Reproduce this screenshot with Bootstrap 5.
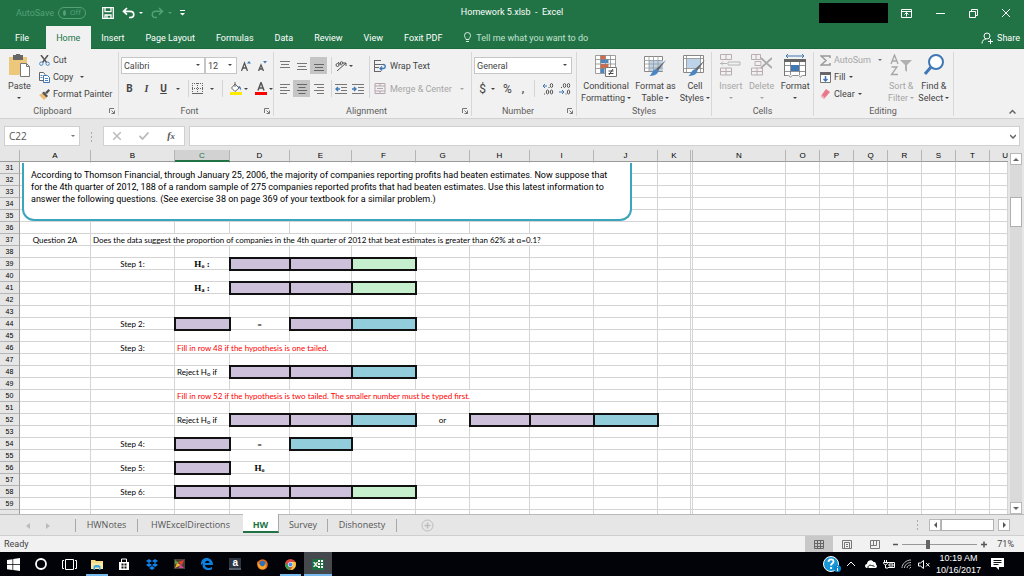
<!DOCTYPE html>
<html lang="en">
<head>
<meta charset="utf-8">
<meta name="viewport" content="width=device-width, initial-scale=1">
<title>Homework 5.xlsb - Excel</title>
<link href="https://cdn.jsdelivr.net/npm/bootstrap@5.3.0/dist/css/bootstrap.min.css" rel="stylesheet">
<style>
:root{--xl:#217346;--bar:#e6e6e6;--ribbon:#f1f1f1;--ui:Roboto,"Liberation Sans",sans-serif}
body{font:9px/12px var(--ui);color:#444;background:#fff;overflow:hidden}
button{border:0;background:none;padding:0;color:inherit;font:inherit;line-height:12px;white-space:nowrap}
svg{display:block;flex:none}
.caret{display:inline-block;border:2px solid transparent;border-top-color:currentColor;border-bottom:0;flex:none}
/* title bar and ribbon tabs */
.titlebar{background:var(--xl);color:#fff;height:26px}
.faded{color:#54a077}
.toggle{border:1px solid;border-radius:8px;height:12px;width:28px;font-size:8px;line-height:10px}
.dot{width:6px;height:6px;border-radius:50%;background:currentColor}
.doc-title{left:0;right:0;top:6px;text-align:center;pointer-events:none}
.window-tools{gap:24px;padding-right:14px}
.account{background:#000;width:69px;height:20px;margin-right:-11px}
.menubar{background:var(--xl);height:23px;border-bottom:1px solid #1b6a3d}
.menubar button{padding:0 10px 0 11px;height:23px;color:#fff}
.menubar .file{margin-right:7px}
.menubar .current{background:var(--ribbon);color:var(--xl);padding:0 11px 0 10px}
.menubar .current+button{padding-left:10px}
.menubar .hint{color:#c3e2d0}
/* ribbon */
.ribbon{background:var(--ribbon);height:70px;border-bottom:1px solid #d2d2d2}
.group{border-right:1px solid #d8d8d8;margin:3px 0 2px;height:64px}
.group-body{height:54px}
.group-name{height:10px;line-height:10px;color:#5c5c5c;position:relative;text-align:center}
.launch{position:absolute;right:3px;top:2px}
.off{color:#a6a6a6}
.big{display:flex;flex-direction:column;align-items:center;gap:2px;color:#444;padding-top:2px}
.big.off{color:#a6a6a6}
.big .label{line-height:12px;text-align:center}
.big svg{height:24px}
.big .caret{vertical-align:2px}
.stack{display:flex;flex-direction:column;gap:5px;padding-top:2px}
.stack button{display:flex;align-items:center;gap:3px}
.row-top{padding-top:5px}
.row-low{margin-top:6px}
.ribbon select{border:1px solid #c6c6c6;background:#fff;color:#444;font:9px/12px var(--ui);border-radius:0;appearance:none;height:17px;padding:0 2px}
.pick{position:relative}
.pick .caret{position:absolute;right:5px;top:7px}
.ico{width:17px;height:17px;display:flex;align-items:center;justify-content:center}
.ico.on{background:#c5c5c5}
.vr-line{width:1px;height:17px;background:#d4d4d4}
.vr-tall{height:42px;margin-top:4px}
.glyph{font-weight:700;font-size:10px}
/* formula bar */
.formula{background:var(--bar);height:32px;padding:7px 4px 0}
.formula>*{height:20px}
.box{background:#fff;border:1px solid #d0d0d0}
.formula input{font:10px/12px "Open Sans",sans-serif;color:#555;min-width:0;height:20px;border-radius:0}
.formula .pick .caret{top:9px}
.namebox{width:76px}
.grip{margin:0 8px}
.fxbox{width:82px}
.fx{font:italic 700 10px/12px "Liberation Serif",serif;color:#555}
.entry{background:#fff;border:1px solid #d0d0d0;width:100%;padding:0 16px 0 4px}
/* grid */
.sheet{background:var(--bar);min-height:0}
.grid-wrap{overflow:hidden;min-height:0}
.cells{table-layout:fixed;width:100%;border-collapse:separate;border-spacing:0;background:#fff;color:#000;font:8px/10px Lato,Roboto,sans-serif}
.cells th,.cells td{padding:0;height:12px;border:0 solid #d4d4d4;border-width:0 1px 1px 0;white-space:nowrap}
.cells thead th{background:var(--bar);height:12px;border-bottom:1px solid #9b9b9b;border-right-color:#b5b5b5;font:8px/9px "Liberation Sans",sans-serif;color:#000;text-align:center}
.cells thead th:last-child{text-align:right;border-right:0}
.cells thead th.sel{background:#d2d2d2;color:var(--xl);border-bottom:2px solid var(--xl)}
.cells tbody th{background:var(--bar);border-right-color:#9b9b9b;border-bottom-color:#b5b5b5;font:7px/10px "Liberation Sans",sans-serif;color:#000;text-align:center}
.cells td{text-align:center}
.cells td.left{text-align:left;padding-left:2px}
.cells .red{color:#f00}
.cells sub{font-size:6px;line-height:1;bottom:-1px}
.hyp{font:700 9px/10px "Liberation Serif",serif}
.lilac,.green,.blue{outline:2px solid #111;outline-offset:-1px;position:relative}
.lilac{background:#ccc0da}.green{background:#c6efce}.blue{background:#92cddc}
.note{left:22px;top:13px;width:610px;height:58px;border:2px solid #3aa5bd;border-top:0;border-radius:0 0 12px 12px;background:#fff;color:#000;padding:6px 0 0 7px;line-height:12px;z-index:2}
.vscroll{width:16px;padding:3px 2px 0}
.vscroll .track{background:#dadada}
.sbtn{border:1px solid #b8b8b8;background:#fff;width:12px;height:12px;display:flex;align-items:center;justify-content:center;flex:none}
.thumb{height:30px;border:1px solid #b0b0b0;background:#fff;margin-top:32px}
/* sheet tabs, status and task bars */
.tabs{background:var(--bar);height:22px;border-top:1px solid #b9b9b9;border-bottom:1px solid #cfcfcf;font:9px/12px "Open Sans",sans-serif}
.tabs .tab{color:#555;position:relative;height:13px;margin-top:4px;border-right:1px solid #a8a8a8;text-decoration:none;text-align:center}
.tabs .tab.active{color:var(--xl);font-weight:700;background:#fff;height:19px;margin-top:-1px;padding-top:5px;border-bottom:2px solid var(--xl)}
.tab-scroll{margin-right:14px}
.hbar{width:53px;height:12px;border:1px solid #b0b0b0;background:#fff}
.status{background:#f1f1f1;height:16px}
.status .view{width:28px;height:16px;display:flex;align-items:center;justify-content:center}
.status .view.on{background:#c8c8c8}
.percent{margin-left:10px;padding-right:10px}
.zoom{appearance:none;width:75px;height:10px;background:linear-gradient(#999,#999) center/100% 1px no-repeat}
.zoom::-webkit-slider-thumb{appearance:none;width:4px;height:9px;background:#666}
.taskbar{background:#020308;height:24px;color:#fff}
.apps{display:grid;grid-template-columns:repeat(12,1fr);width:332px}
.apps button{height:24px;display:flex;align-items:center;justify-content:center}
.apps .open{border-bottom:2px solid #76b9ed;padding-top:2px;margin:0 3px}
.apps .front{background:#45484c;margin:0}
.amazon{background:#2b3440;width:12px;height:12px;font:700 10px/9px "Liberation Sans",sans-serif;border-bottom:2px solid #55606c}
.excel{background:#1d6f42;height:11px;padding:0 1px;font:700 8px/11px var(--ui)}
.tray{gap:6px}
.clock{font:9px/12px "Liberation Sans",sans-serif;text-align:center}
</style>
</head>
<body class="d-flex flex-column vh-100">

<header>
<div class="titlebar d-flex align-items-center position-relative">
  <span class="faded ms-3">AutoSave</span>
  <button class="toggle faded d-flex align-items-center gap-1 ms-1 px-1" aria-label="AutoSave off"><span class="dot"></span>Off</button>
  <button class="ms-3" aria-label="Save"><svg width="12" height="12" viewBox="0 0 12 12" fill="none" stroke="#fff" stroke-width="1.3"><path d="M.7.7h10.600v10.600H.7zM3 .7v4h6v-4M3 11.300V8h6v3.300M5 8v3"/></svg></button>
  <button class="ms-2 d-flex align-items-center gap-1" aria-label="Undo"><svg width="13" height="12" viewBox="0 0 13 12" fill="none" stroke="#fff" stroke-width="1.700"><path d="M5 1 1.500 4.300 5 7.600M1.500 4.300H8c5 0 5 6.200 0 6.200H7"/></svg><span class="caret"></span></button>
  <button class="ms-2 d-flex align-items-center gap-1 faded" aria-label="Redo"><svg width="13" height="12" viewBox="0 0 13 12" fill="none" stroke="currentColor" stroke-width="1.500"><path d="m8 1 3.500 3.300L8 7.600M11.500 4.300H5c-5 0-5 6.200 0 6.200h1"/></svg><span class="caret"></span></button>
  <button class="ms-2" aria-label="Customize toolbar"><svg width="5" height="6" viewBox="0 0 5 6" fill="#fff"><path d="M0 0h5v1H0zM0 3h5L2.500 5.500z"/></svg></button>
  <div class="doc-title position-absolute">Homework 5.xlsb&nbsp; -&nbsp; Excel</div>
  <div class="window-tools d-flex align-items-center ms-auto">
    <div class="account"></div>
    <button aria-label="Ribbon display options"><svg width="11" height="9" viewBox="0 0 11 9" fill="none" stroke="#fff"><path d="M.5.5h10v8H.5zM.5 2.500h10M5.500 7.500v-4M3.500 5.500l2-2 2 2"/></svg></button>
    <button aria-label="Minimize"><svg width="9" height="9" stroke="#fff"><path d="M0 4.500h9"/></svg></button>
    <button aria-label="Restore"><svg width="9" height="9" viewBox="0 0 9 9" fill="none" stroke="#fff"><path d="M.5 2.500h6v6h-6zM2.500 2.500v-2h6v6h-2"/></svg></button>
    <button aria-label="Close"><svg width="8" height="8" stroke="#fff"><path d="m0 0 8 8M8 0 0 8"/></svg></button>
  </div>
</div>
<nav class="menubar d-flex ps-1">
  <button class="file">File</button><button class="current">Home</button><button>Insert</button><button>Page Layout</button><button>Formulas</button><button>Data</button><button>Review</button><button>View</button><button>Foxit PDF</button>
  <button class="hint d-flex align-items-center gap-1"><svg width="9" height="11" viewBox="0 0 9 11" fill="none" stroke="#d8eee1"><path d="M3 7.500C3 6 1.500 5.500 1.500 3.500a3 3 0 0 1 6 0c0 2-1.500 2.500-1.500 4zM3 9.500h3"/></svg>Tell me what you want to do</button>
  <button class="ms-auto d-flex align-items-center gap-1 pe-1"><svg width="12" height="12" viewBox="0 0 12 12" fill="none" stroke="#fff"><circle cx="6" cy="4" r="3"/><path d="M1 11.500c0-3 2-4.500 4-4.500M9.500 7v5M7 9.500h5"/></svg>Share</button>
</nav>

<div class="ribbon d-flex">
  <section class="group" style="width:119px">
    <div class="group-body d-flex ps-2 gap-2">
      <button class="big"><svg width="22" height="24" viewBox="0 0 22 24"><path d="M1 3h18v18H1z" fill="#edc77c"/><path d="M5 1h10v5H5z" fill="#666"/><path d="M8 0h4v3H8z" fill="#666"/><path d="M12.500 9.500h6l3 3v10h-9z" fill="#fff" stroke="#777"/><path d="M18.500 9.500v3h3" fill="none" stroke="#777"/></svg><span class="label">Paste<br><span class="caret"></span></span></button>
      <div class="stack">
        <button><svg width="11" height="11" viewBox="0 0 11 11" fill="none"><path d="m2 0 5.500 7.500M9 0 3.500 7.500" stroke="#555" stroke-width="1.500"/><circle cx="2.300" cy="8.700" r="1.700" stroke="#4a86c5"/><circle cx="8.700" cy="8.700" r="1.700" stroke="#4a86c5"/></svg>Cut</button>
        <button><svg width="11" height="11" viewBox="0 0 11 11"><path d="M.5.5h4l1.500 2v6H.5z" fill="#fff" stroke="#666"/><path d="M4.500 3.500h4l2 2v5h-6z" fill="#fff" stroke="#3f78b5"/><path d="M6 6.500h3M6 8.500h3M1.500 3.500h2M1.500 5.500h2" stroke="#4a86c5"/></svg>Copy<span class="caret ms-1"></span></button>
        <button><svg width="11" height="11" viewBox="0 0 11 11"><path d="m0 6 4-2 4 4-3 3z" fill="#edbd76"/><path d="m3 4 2-1.500L9 7 7.500 8.500zM6 3.500 9.500 0 11 1.500 8 5z" fill="#555"/></svg>Format Painter</button>
      </div>
    </div>
    <div class="group-name" style="padding-right:13px">Clipboard<svg class="launch" width="6" height="6" fill="none" stroke="#777"><path d="M.5 5V.5H5M2.500 2.500l3 3M5.500 2.500v3h-3"/></svg></div>
  </section>

  <section class="group" style="width:155px">
    <div class="group-body" style="padding-left:2px">
      <div class="d-flex row-top align-items-center">
        <label class="pick"><select aria-label="Font" style="width:84px"><option>Calibri</option></select><span class="caret"></span></label>
        <label class="pick"><select aria-label="Font size" style="width:32px"><option>12</option></select><span class="caret"></span></label>
        <button class="ico" aria-label="Grow font"><svg width="10" height="10" viewBox="0 0 10 10" fill="none"><path d="m.5 10 3-8 3 8M1.500 7h4" stroke="#555" stroke-width="1.300"/><path d="m6 2.500 2-2.500 2 2.500z" fill="#3f78b5"/></svg></button>
        <button class="ico" aria-label="Shrink font"><svg width="9" height="10" viewBox="0 0 9 10" fill="none"><path d="M.5 10 3 4l2.500 6M1.300 8h3.400" stroke="#555" stroke-width="1.300"/><path d="m5 0 2 2.500L9 0z" fill="#3f78b5"/></svg></button>
      </div>
      <div class="d-flex align-items-center row-low">
        <button class="ico glyph">B</button><button class="ico fst-italic glyph" style="font-family:Liberation Serif,serif">I</button><button class="ico text-decoration-underline glyph">U</button><span class="caret ms-1 me-2"></span>
        <span class="vr-line"></span>
        <button class="ico" aria-label="Borders"><svg width="11" height="11" viewBox="0 0 11 11" fill="none" stroke="#666"><path d="M0 .5h11M.5 0v11M10.500 0v11M5.500 0v11M0 5.500h11" stroke-dasharray="1 1"/><path d="M0 10.500h11"/></svg></button><span class="caret ms-1 me-2"></span>
        <span class="vr-line"></span>
        <button class="ico ms-1" aria-label="Fill color"><svg width="12" height="13" viewBox="0 0 12 13"><path d="M0 10h12v3H0z" fill="#ffeb00"/><path d="m5 2 4 4-4 3.500L1.500 6z" fill="#fff" stroke="#666"/><path d="M5 5V0" stroke="#666"/><path d="M8.500 4c2 0 3 2 2.500 5-.5-2-1-2.500-2-3z" fill="#3f78b5"/></svg></button><span class="caret me-1"></span>
        <button class="ico" aria-label="Font color"><svg width="12" height="13" viewBox="0 0 12 13"><path d="M0 10h12v3H0z" fill="#f00"/><path d="m3 8.500 3-8 3 8M4 6h4" fill="none" stroke="#555" stroke-width="1.500"/></svg></button><span class="caret"></span>
      </div>
    </div>
    <div class="group-name" style="padding-right:13px">Font<svg class="launch" width="6" height="6" fill="none" stroke="#777"><path d="M.5 5V.5H5M2.500 2.500l3 3M5.500 2.500v3h-3"/></svg></div>
  </section>

  <section class="group" style="width:198px">
    <div class="group-body d-flex">
      <div style="width:95px;padding-left:2px">
        <div class="d-flex row-top align-items-center">
          <button class="ico" aria-label="Top align"><svg width="10" height="10" stroke="#777"><path d="M0 .5h10M1 3.500h8M0 6.500h10"/></svg></button>
          <button class="ico" aria-label="Middle align"><svg width="10" height="8" stroke="#777"><path d="M0 1.500h10M1 4.500h8M0 7.500h10"/></svg></button>
          <button class="ico on" aria-label="Bottom align"><svg width="10" height="10" stroke="#666"><path d="M0 3.500h10M1 6.500h8M0 9.500h10"/></svg></button>
          <span class="vr-line ms-1"></span>
          <button class="ico" aria-label="Orientation"><svg width="12" height="11" viewBox="0 0 12 11" fill="none" stroke="#555"><path d="m2 11 9-8M8 3h3v3"/><circle cx="2.500" cy="5" r="1.500"/><path d="m3 2 3 3.500"/><circle cx="6.500" cy="3" r="1.300"/></svg></button><span class="caret"></span>
        </div>
        <div class="d-flex align-items-center row-low">
          <button class="ico" aria-label="Align left"><svg width="10" height="10" stroke="#777"><path d="M0 .5h10M0 3.500h7M0 6.500h10M0 9.500h7"/></svg></button>
          <button class="ico on" aria-label="Center"><svg width="10" height="10" stroke="#666"><path d="M0 .5h10M1.500 3.500h7M0 6.500h10M1.500 9.500h7"/></svg></button>
          <button class="ico" aria-label="Align right"><svg width="10" height="10" stroke="#777"><path d="M0 .5h10M3 3.500h7M0 6.500h10M3 9.500h7"/></svg></button>
          <span class="vr-line ms-1"></span>
          <button class="ico" aria-label="Decrease indent"><svg width="12" height="10" viewBox="0 0 12 10" fill="none"><path d="M0 .5h12M6 3.500h6M6 6.500h6M0 9.500h12" stroke="#777"/><path d="M5 5H1m2-2L1 5l2 2" stroke="#3f78b5" stroke-width="1.300"/></svg></button>
          <button class="ico" aria-label="Increase indent"><svg width="12" height="10" viewBox="0 0 12 10" fill="none"><path d="M0 .5h12M6 3.500h6M6 6.500h6M0 9.500h12" stroke="#777"/><path d="M0 5h4M2 3l2 2-2 2" stroke="#3f78b5" stroke-width="1.300"/></svg></button>
        </div>
      </div>
      <span class="vr-line vr-tall"></span>
      <div class="row-top ps-1">
        <button class="d-flex align-items-center gap-1" style="height:17px"><svg width="12" height="12" viewBox="0 0 12 12" fill="none"><path d="M0 .5h7M0 4.500h10M0 7.500h5M0 11.500h7M.5 0v12" stroke="#666"/><path d="M9 4.500c3 0 3 4 0 4H6.500M8 6.500l-2 2 2 2" stroke="#3f78b5" stroke-width="1.300"/></svg>Wrap Text</button>
        <button class="d-flex align-items-center gap-1 off row-low" style="height:17px"><svg width="12" height="11" viewBox="0 0 11 11" fill="none" stroke="#b5a5ad"><path d="M.5.5h10v10H.5zM.5 3h10M.5 8h10M5.500 0v3M5.500 8v3M2.500 5.500h6"/></svg>Merge &amp; Center<span class="caret ms-1"></span></button>
      </div>
    </div>
    <div class="group-name" style="padding-right:12px">Alignment<svg class="launch" width="6" height="6" fill="none" stroke="#777"><path d="M.5 5V.5H5M2.500 2.500l3 3M5.500 2.500v3h-3"/></svg></div>
  </section>

  <section class="group" style="width:105px">
    <div class="group-body" style="padding-left:2px">
      <div class="row-top d-flex"><label class="pick"><select aria-label="Number format" style="width:98px"><option>General</option></select><span class="caret"></span></label></div>
      <div class="d-flex align-items-center row-low">
        <button class="ico" style="font-size:12px">$</button><span class="caret"></span>
        <button class="ico ms-1" style="font-size:12px">%</button><button class="ico glyph" style="width:14px">,</button>
        <span class="vr-line mx-1"></span>
        <button class="ico" aria-label="Increase decimal"><svg width="12" height="12" viewBox="0 0 12 12" fill="none"><path d="M5 3H1m2-2L1 3l2 2" stroke="#3f78b5"/><g stroke="#555"><ellipse cx="9.500" cy="2.500" rx="1.200" ry="2"/><ellipse cx="5.500" cy="9" rx="1.200" ry="2"/><ellipse cx="9.500" cy="9" rx="1.200" ry="2"/><path d="M6.500 4.500h1M2 11h1"/></g></svg></button>
        <button class="ico" aria-label="Decrease decimal"><svg width="12" height="12" viewBox="0 0 12 12" fill="none"><path d="M0 9h5M3 7l2 2-2 2" stroke="#3f78b5"/><g stroke="#555"><ellipse cx="5.500" cy="2.500" rx="1.200" ry="2"/><ellipse cx="9.500" cy="2.500" rx="1.200" ry="2"/><ellipse cx="9.500" cy="9" rx="1.200" ry="2"/><path d="M2 4.500h1M6.500 11h1"/></g></svg></button>
      </div>
    </div>
    <div class="group-name" style="padding-right:12px">Number<svg class="launch" width="6" height="6" fill="none" stroke="#777"><path d="M.5 5V.5H5M2.500 2.500l3 3M5.500 2.500v3h-3"/></svg></div>
  </section>

  <section class="group" style="width:135px">
    <div class="group-body d-flex ps-1 gap-1">
      <button class="big"><svg width="23" height="24" viewBox="0 0 23 24"><path d="M.5 1.500h20v18H.5z" fill="#fff"/><path d="M5.500 1h5v4h-5zM5.500 10h8v4h-8z" fill="#dd6540"/><path d="M5.500 5h8v4h-8zM5.500 14h4v5h-4z" fill="#4a86c5"/><path d="M.5 1.500h20v18H.5zM.5 5.500h20M.5 10h20M.5 14.500h20M5.500 1v18M10.500 1v18M15.500 1v18" fill="none" stroke="#888" stroke-width=".8"/><path d="M10.500 13.500h11v9h-11z" fill="#fff" stroke="#777"/><path d="M13.500 17h5M13.500 19.500h5M18 15l-4 6" stroke="#444"/></svg><span class="label">Conditional<br>Formatting <span class="caret"></span></span></button>
      <button class="big"><svg width="23" height="24" viewBox="0 0 23 24"><path d="M.5 2.500h18v15H.5z" fill="#fff" stroke="#888"/><path d="M5 6h14v11H5z" fill="#bcd3ea"/><path d="M0 6.500h19M0 10h19M0 14h19M5 2v15M9.500 2v15M14 2v15" stroke="#999" stroke-width=".8"/><path d="m22 6-8 11-2-2z" fill="#666"/><path d="M13 15c3 2 1 7-8 7 3-1 3-7 8-7z" fill="#4a86c5"/></svg><span class="label">Format as<br>Table <span class="caret"></span></span></button>
      <button class="big"><svg width="23" height="24" viewBox="0 0 23 24"><path d="M.5 1.500h20v17H.5z" fill="#fff" stroke="#888"/><path d="M4 5h13v9H4z" fill="#bcd3ea"/><path d="M0 4.500h20M0 14.500h20M3.500 1v17M17.500 1v17" stroke="#888" stroke-width=".8"/><path d="m22 6-8 11-2-2z" fill="#666"/><path d="M13 15c3 2 1 7-8 7 3-1 3-7 8-7z" fill="#4a86c5"/></svg><span class="label">Cell<br>Styles <span class="caret"></span></span></button>
    </div>
    <div class="group-name">Styles</div>
  </section>

  <section class="group" style="width:102px">
    <div class="group-body d-flex justify-content-around ps-1">
      <button class="big off"><svg width="21" height="24" viewBox="0 0 21 24" fill="none" stroke="#b9adb3"><path d="M.5.500h11v5H.5zM.5 14h11v7H.5zM6 .5v5M6 14v7M.5 17.500h11"/><path d="M8 8h12v3H8zM0 9.500h7M3 7.500l-2 2 2 2" stroke="#b5b5b5"/></svg><span class="label">Insert<br><span class="caret"></span></span></button>
      <button class="big off"><svg width="21" height="24" viewBox="0 0 21 24" fill="none" stroke="#b9adb3"><path d="M.5.500h9v5h-9zM.5 14h11v7H.5zM5 .5v5M6 14v7M.5 17.500h11M4 7.500h6v4H4z"/><path d="m10 4 11 10M21 4 10 14" stroke="#aaa" stroke-width="1.800"/></svg><span class="label">Delete<br><span class="caret"></span></span></button>
      <button class="big"><svg width="22" height="24" viewBox="0 0 22 24" fill="none" stroke="#777"><path d="M2 2h18M4 0 2 2l2 2M18 0l2 2-2 2" stroke="#3f78b5"/><path d="M.5 5v17M21.500 5v17" stroke="#777"/><path d="M0 5h22v3H0z" fill="#666" stroke="none"/><path d="M1 8h20v13H1z" fill="#fff" stroke="none"/><path d="M.5 11.500h21M.5 17.500h21M6.500 8v13M15.500 8v13M.5 21.500h4l2 1.500 2-1.500h6l2 1.500 2-1.500h3" stroke-width=".8"/><path d="M7 11h8v6H7z" fill="#3f78b5" stroke="none"/></svg><span class="label">Format<br><span class="caret"></span></span></button>
    </div>
    <div class="group-name">Cells</div>
  </section>

  <section class="group" style="width:140px">
    <div class="group-body d-flex ps-1">
      <div class="stack" style="width:70px;padding-left:2px">
        <button class="off"><svg width="11" height="11" viewBox="0 0 11 11" fill="none" stroke="#999" stroke-width="1.500"><path d="M10 3V1H1l5 4.500L1 10h9V8"/></svg>AutoSum<span class="caret ms-1 text-secondary"></span></button>
        <button><svg width="11" height="11" viewBox="0 0 11 11" fill="none"><path d="M.5.5h10v10H.5z" fill="#fff" stroke="#777"/><path d="M0 0h11v3H0z" fill="#666"/><path d="M5.500 4v5M3.500 7l2 2 2-2" stroke="#3f78b5" stroke-width="1.500"/></svg>Fill<span class="caret"></span></button>
        <button><svg width="11" height="11" viewBox="0 0 11 11"><path d="m6 0 4 3-6 7-3-3z" fill="#e8788a"/><path d="m2 6 3 3-1 1-3-2z" fill="#f3b6c0"/></svg>Clear<span class="caret"></span></button>
      </div>
      <button class="big off"><svg width="22" height="24" viewBox="0 0 22 24" fill="none" stroke="#a6a6a6" stroke-width="1.300"><path d="m1 10 3.500-9L8 10M2 7h5M1.500 13H7L1.500 20.500H8"/><path d="M10 6h12l-5 5v7l-2-2v-5z" fill="#b0b0b0" stroke="none"/></svg><span class="label">Sort &amp;<br>Filter <span class="caret"></span></span></button>
      <button class="big ms-1"><svg width="22" height="24" viewBox="0 0 22 24" fill="none" stroke="#3f78b5"><circle cx="13" cy="8" r="7" stroke-width="2" fill="#fff"/><path d="m8 13-6 7" stroke-width="3"/></svg><span class="label">Find &amp;<br>Select <span class="caret"></span></span></button>
    </div>
    <div class="group-name" style="padding-right:1px">Editing</div>
  </section>
  <button class="ms-auto align-self-end me-2 mb-1" aria-label="Collapse the ribbon"><svg width="7" height="5" fill="none" stroke="#666" stroke-width="1.500"><path d="M.5 4.500l3-3 3 3"/></svg></button>
</div>
</header>

<div class="formula d-flex">
  <label class="pick namebox"><input class="box w-100 px-1" aria-label="Name box" value="C22"><span class="caret" style="color:#777"></span></label>
  <svg class="grip" width="7" height="20" fill="#aaa"><path d="M3 6h1v2H3zM3 10h1v2H3zM3 14h1v2H3z"/></svg>
  <div class="box fxbox d-flex align-items-center justify-content-around me-1">
    <button aria-label="Cancel"><svg width="8" height="8" stroke="#bbb" stroke-width="1.500"><path d="m0 0 8 8M8 0 0 8"/></svg></button>
    <button aria-label="Enter"><svg width="10" height="8" fill="none" stroke="#bbb" stroke-width="1.800"><path d="m.5 4 3 3 6-6.500"/></svg></button>
    <button aria-label="Insert function" class="fx">f<small>x</small></button>
  </div>
  <label class="pick flex-fill"><input class="entry" aria-label="Formula"><svg class="position-absolute end-0 top-0 mt-2 me-1" width="6" height="5" fill="none" stroke="#666" stroke-width="1.500"><path d="m0 1 3 3 3-3"/></svg></label>
</div>

<main class="sheet flex-fill d-flex">
  <div class="grid-wrap flex-fill position-relative">
    <table class="cells">
      <colgroup id="cols"></colgroup>
      <thead><tr id="letters"></tr></thead>
      <tbody id="rows"></tbody>
    </table>
    <div class="note position-absolute">According to Thomson Financial, through January 25, 2006, the majority of companies reporting profits had beaten estimates. Now suppose that<br>for the 4th quarter of 2012, 188 of a random sample of 275 companies reported profits that had beaten estimates. Use this latest information to<br>answer the following questions. (See exercise 38 on page 369 of your textbook for a similar problem.)</div>
  </div>
  <div class="vscroll d-flex flex-column">
    <div class="track d-flex flex-column flex-fill">
      <button class="sbtn" aria-label="Scroll up"><svg width="6" height="3" fill="#666"><path d="m0 3 3-3 3 3z"/></svg></button>
      <div class="thumb"></div>
      <button class="sbtn mt-auto" aria-label="Scroll down"><svg width="6" height="3" fill="#666"><path d="m0 0 3 3 3-3z"/></svg></button>
    </div>
  </div>
</main>

<footer>
<div class="tabs d-flex">
  <div class="tab d-flex align-items-center justify-content-center gap-3" style="width:76px;color:#bbb"><svg width="4" height="6" fill="currentColor"><path d="M4 0v6L0 3z"/></svg><svg width="4" height="6" fill="currentColor"><path d="M0 0v6l4-3z"/></svg></div>
  <a href="#" class="tab" style="width:62px">HWNotes</a><a href="#" class="tab border-0" style="width:105px">HWExcelDirections</a><a href="#" class="tab active" style="width:36px">HW</a><a href="#" class="tab" style="width:49px">Survey</a><a href="#" class="tab" style="width:69px">Dishonesty</a>
  <button class="ms-4" aria-label="New sheet"><svg width="13" height="13" fill="none" stroke="#bdbdbd"><circle cx="6.500" cy="6.500" r="5.500"/><path d="M6.500 3.500v6M3.500 6.500h6" stroke-width="1.500"/></svg></button>
  <div class="tab-scroll d-flex align-items-center ms-auto">
    <svg class="me-2" width="5" height="10" fill="#aaa"><path d="M1 0h1v2H1zM1 4h1v2H1zM1 8h1v2H1z"/></svg>
    <button class="sbtn" aria-label="Scroll left"><svg width="3" height="6" fill="#555"><path d="M3 0v6L0 3z"/></svg></button><div class="hbar me-1"></div><button class="sbtn" aria-label="Scroll right"><svg width="3" height="6" fill="#555"><path d="M0 0v6l3-3z"/></svg></button>
  </div>
</div>
<div class="status d-flex align-items-center ps-1">
  <span class="me-auto">Ready</span>
  <button class="view on" aria-label="Normal view"><svg width="10" height="9" fill="none" stroke="#666"><path d="M.5.5h9v8h-9zM3.500 0v9M6.500 0v9M0 3.500h10M0 6.500h10"/></svg></button>
  <button class="view" aria-label="Page layout view"><svg width="10" height="9" fill="none" stroke="#777"><path d="M.5.5h9v8h-9zM2.500 2.500h5v6h-5zM4 4.500h2M4 6.500h2"/></svg></button>
  <button class="view" aria-label="Page break view"><svg width="10" height="9" fill="none" stroke="#777"><path d="M.5.5h9v8h-9zM3.500 0v5.500M6.500 0v5.500M0 5.500h6.500"/></svg></button>
  <button class="mx-1" aria-label="Zoom out"><svg width="5" height="9" stroke="#555" stroke-width="1.500"><path d="M0 4.500h5"/></svg></button>
  <input class="zoom" type="range" min="0" max="100" value="34" aria-label="Zoom">
  <button class="ms-1" aria-label="Zoom in"><svg width="6" height="9" stroke="#555" stroke-width="1.500"><path d="M0 4.500h6M3 1.500v6"/></svg></button>
  <span class="percent">71%</span>
</div>
<div class="taskbar d-flex align-items-center">
  <div class="apps">
    <button aria-label="Start"><svg width="13" height="13" viewBox="0 0 13 13" fill="#fff"><path d="m0 2 5.500-.8v5H0zM6.200 1 13 0v6.200H6.200zM0 7h5.500v5L0 11.200zM6.200 7H13v6l-6.800-1z"/></svg></button>
    <button aria-label="Cortana"><svg width="12" height="12" fill="none" stroke="#fff" stroke-width="1.800"><circle cx="6" cy="6" r="5"/></svg></button>
    <button aria-label="Task view"><svg width="15" height="11" fill="none" stroke="#fff"><path d="M3.500.5h8v10h-8zM2 1.500H.5v8H2M13 1.500h1.500v8H13"/></svg></button>
    <button class="open" aria-label="File Explorer"><svg width="12" height="11" viewBox="0 0 12 11"><path d="M0 1h4l1 1h7v8H0z" fill="#f7dc86"/><path d="M0 4h12v6H0z" fill="#fbe7a3"/><path d="M2.500 11V7.500c0-2 7-2 7 0V11H8V8.500H4V11z" fill="#3fa8e0"/></svg></button>
    <button aria-label="Store"><svg width="12" height="12" viewBox="0 0 12 12"><path d="M1 4h10v8H1z" fill="#fff"/><path d="M3.500 4V1h5v3" fill="none" stroke="#fff"/><path d="M3.500 5.500h2v2h-2zM6.500 5.500h2v2h-2zM3.500 8.500h2v2h-2zM6.500 8.500h2v2h-2z" fill="#111"/></svg></button>
    <button aria-label="Dropbox"><svg width="12" height="11" viewBox="0 0 12 11" fill="#1081e8"><path d="m3 0 3 2-3 2-3-2zM9 0l3 2-3 2-3-2zM3 4l3 2-3 2-3-2zM9 4l3 2-3 2-3-2zM6 7l3 2-3 2-3-2z"/></svg></button>
    <button aria-label="Photos"><svg width="11" height="10" viewBox="0 0 11 10"><path d="M0 0h11v10H0z" fill="#493f38"/><path d="m1 1 4 3-4 1z" fill="#57a53a"/><path d="m4 3 6-2-2 5z" fill="#eb3f2f"/><path d="m1 9 2-5 4 2z" fill="#f2b632"/><path d="m6 5 4 4H5z" fill="#d64693"/></svg></button>
    <button aria-label="Edge"><svg width="12" height="12" viewBox="0 0 12 12"><path d="M0 6C0-2 12-2 12 7H4c0 3 4 4 7 2v2.300C5 14 0 10 2 5.500 1 6 .5 6.500 0 7zM4 5h4.500C8.500 2 4.500 2 4 5z" fill="#0c80df"/></svg></button>
    <button aria-label="Amazon"><span class="amazon">a</span></button>
    <button aria-label="Firefox"><svg width="11" height="11" viewBox="0 0 11 11"><circle cx="5.500" cy="5.500" r="5.300" fill="#e66a1d"/><circle cx="5.500" cy="4.800" r="3" fill="#2f6fb5"/><path d="M1 2c0 4 2 3 3 5 2 1 4 0 4-3 3 5-2 7-4 6S-1 5 1 2z" fill="#f7a62b"/></svg></button>
    <button class="open" aria-label="Chrome"><svg width="11" height="11" viewBox="0 0 11 11"><circle cx="5.500" cy="5.500" r="5.500" fill="#dd4b3e"/><path d="M.4 3.500 3.500 7l2 4C2 11-.8 7.500.4 3.500z" fill="#2ea355"/><path d="M5.500 3h5c1.500 4-1.500 8-5 8L8 7z" fill="#fbc931"/><circle cx="5.500" cy="5.500" r="2.500" fill="#fff"/><circle cx="5.500" cy="5.500" r="2" fill="#4b8bf4"/></svg></button>
    <button class="open front" aria-label="Excel"><span class="excel d-flex align-items-center">X<svg width="5" height="8" fill="#fff"><path d="M0 0h2v2H0zM3 0h2v2H3zM0 3h2v2H0zM3 3h2v2H3zM0 6h2v2H0zM3 6h2v2H3z"/></svg></span></button>
  </div>
  <div class="tray d-flex align-items-center ms-auto pe-3">
    <svg width="18" height="17" viewBox="0 0 18 17"><circle cx="8" cy="8" r="7.500" fill="#1797d8" stroke="#fff"/><path d="M5.500 6c0-3.500 5-3.500 5-.5 0 2-2.500 2-2.500 4M8 11v2" fill="none" stroke="#fff" stroke-width="1.800"/><circle cx="14.500" cy="12.500" r="3.500" fill="#0b86cc"/><path d="M14.500 10v1M14.500 12v3" stroke="#fff"/></svg>
    <svg width="8" height="6" fill="none" stroke="#fff"><path d="m0 5 4-4 4 4"/></svg>
    <svg class="ms-1" width="12" height="9" viewBox="0 0 12 9"><path d="M3 8C-1 8-.5 4 2 4c0-4 5-5 6.500-2C11 1.500 11 4 11 4.500c1.500 1 1 3.500-.5 3.500z" fill="#fff"/><path d="M3 8c-.5-3 3-3.500 4-2 1-1 2.500 0 2 1" stroke="#111" fill="none"/></svg>
    <svg width="12" height="9" viewBox="0 0 12 9" fill="none" stroke="#fff"><path d="M4 2.500h7.500v5H5M6 4h4v2H6zM1.500 0v2M3.500 0v2M.5 2.500h4c0 3-4 3-4 0M2.500 5v3H5"/></svg>
    <svg width="11" height="10" viewBox="0 0 11 10" fill="none" stroke="#bbb"><path d="M1 9c0-4 4-8 9-8M3.500 9c0-3 3-5.500 6.500-5.500M6 9c0-2 2-3 4-3M8.500 9.500 10 8"/></svg>
    <svg width="12" height="9" viewBox="0 0 12 9" fill="none" stroke="#fff"><path d="M.5 3h2l3-2.500v8L2.500 6h-2zM8 3l3.500 3.500M11.500 3 8 6.500"/></svg>
    <div class="clock">10:19 AM<br>10/16/2017</div>
    <svg class="ms-1 me-1" width="13" height="12" viewBox="0 0 13 12"><path d="M0 0h13v9H8v3L5 9H0z" fill="#fff"/><path d="M2.500 2.500h8M2.500 4.500h8M2.500 6.500h5" stroke="#111"/></svg>
  </div>
</div>
</footer>

<script src="https://cdn.jsdelivr.net/npm/bootstrap@5.3.0/dist/js/bootstrap.bundle.min.js"></script>
<script>
const widths = {"":20,A:71,B:84,C:55,D:60,E:62,F:64,G:54,H:60,I:64,J:64,K:33,M:2,N:93,O:34,P:34,Q:34,R:34,S:34,T:34,U:""};
const letters = Object.keys(widths);
const step = n => ({t: 'Step ' + n + ':'});
const hyp = (s, colon = '') => ({t: `<span class="hyp">H<sub>${s}</sub>${colon}</span>`});
const red = (t, span) => ({t, span, cls: 'left red'});
const rejectText = {t: 'Reject H<sub>o</sub> if', cls: 'left'};
const eq = {t: '='};
const content = {
  37: {A: {t: 'Question 2A'}, B: {t: 'Does the data suggest the proportion of companies in the 4th quarter of 2012 that beat estimates is greater than 62% at α=0.1?', span: 8, cls: 'left'}},
  39: {B: step(1), C: hyp('o', ' :')}, 41: {C: hyp('a', ' :')},
  44: {B: step(2), D: eq}, 46: {B: step(3), C: red('Fill in row 48 if the hypothesis is one tailed.', 3)},
  48: {C: rejectText}, 50: {C: red('Fill in row 52 if the hypothesis is two tailed. The smaller number must be typed first.', 6)},
  52: {C: rejectText, G: {t: 'or'}}, 54: {B: step(4), D: eq}, 56: {B: step(5), D: hyp('o')}, 58: {B: step(6)}
};
const answers = {39: 'D-lilac E-lilac F-green', 41: 'D-lilac E-lilac F-green', 44: 'C-lilac E-lilac F-blue', 48: 'D-lilac E-lilac F-blue',
  52: 'D-lilac E-lilac F-blue H-lilac I-lilac J-blue', 54: 'C-lilac E-blue', 56: 'C-lilac', 58: 'C-lilac D-lilac E-lilac F-green'};
for (const row in answers) for (const a of answers[row].split(' ')) { const [col, cls] = a.split('-'); content[row][col] = {cls}; }

document.getElementById('cols').innerHTML = letters.map(l => `<col${widths[l] ? ` style="width:${widths[l]}px"` : ''}>`).join('');
document.getElementById('letters').innerHTML = letters.map(l => `<th scope="col"${l === 'C' ? ' class="sel"' : ''}>${l === 'M' ? '' : l}</th>`).join('');
let html = '';
for (let r = 31; r <= 60; r++) {
  html += `<tr><th scope="row">${r < 60 ? r : ''}</th>`;
  for (let i = 1; i < letters.length; i++) {
    const cell = (content[r] || {})[letters[i]] || {};
    html += `<td${cell.span ? ` colspan="${cell.span}"` : ''}${cell.cls ? ` class="${cell.cls}"` : ''}>${cell.t || ''}</td>`;
    if (cell.span) i += cell.span - 1;
  }
  html += '</tr>';
}
document.getElementById('rows').innerHTML = html;
</script>
</body>
</html>
